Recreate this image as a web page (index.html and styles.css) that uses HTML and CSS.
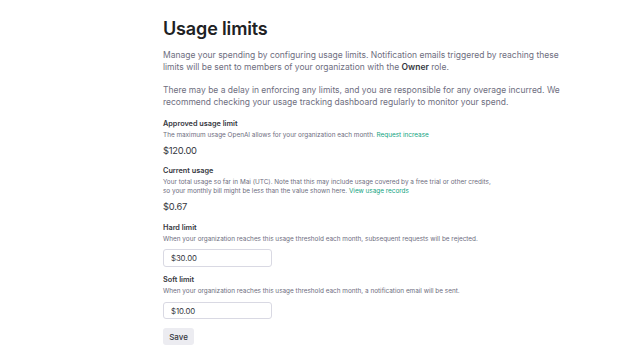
FILE: index.html
```html
<!DOCTYPE html>
<html lang="en">
<head>
<meta charset="utf-8">
<title>Usage limits</title>
<link rel="stylesheet" href="styles.css">
</head>
<body>
<main class="page">
  <h1 class="title">Usage limits</h1>
  <p class="intro">Manage your spending by configuring usage limits. Notification emails triggered by reaching these limits will be sent to members of your organization with the <strong>Owner</strong> role.</p>
  <p class="intro">There may be a delay in enforcing any limits, and you are responsible for any overage incurred. We recommend checking your usage tracking dashboard regularly to monitor your spend.</p>

  <section class="field">
    <h2 class="label">Approved usage limit</h2>
    <p class="desc">The maximum usage OpenAI allows for your organization each month. <a class="link" href="#">Request increase</a></p>
    <div class="value">$120.00</div>
  </section>

  <section class="field">
    <h2 class="label">Current usage</h2>
    <p class="desc">Your total usage so far in Mai (UTC). Note that this may include usage covered by a free trial or other credits,<br>so your monthly bill might be less than the value shown here. <a class="link" href="#">View usage records</a></p>
    <div class="value">$0.67</div>
  </section>

  <section class="field">
    <h2 class="label">Hard limit</h2>
    <p class="desc">When your organization reaches this usage threshold each month, subsequent requests will be rejected.</p>
    <input class="input" type="text" value="$30.00">
  </section>

  <section class="field">
    <h2 class="label">Soft limit</h2>
    <p class="desc">When your organization reaches this usage threshold each month, a notification email will be sent.</p>
    <input class="input" type="text" value="$10.00">
  </section>

  <button class="save" type="button">Save</button>
</main>
</body>
</html>
```

FILE: styles.css
```css
* { box-sizing: border-box; }

html, body {
  margin: 0;
  padding: 0;
  background: #ffffff;
}

body {
  font-family: "Inter", "Noto Sans", "Liberation Sans", sans-serif;
  color: #353740;
}

.page {
  width: 410px;
  margin-left: 163px;
  padding-top: 16.5px;
  display: flex;
  flex-direction: column;
  align-items: flex-start;
}

.title {
  margin: 0 0 8px;
  font-size: 18px;
  line-height: 24px;
  font-weight: 600;
  color: #202123;
  letter-spacing: -0.15px;
}

.intro {
  margin: 0 0 11px;
  font-size: 8.5px;
  line-height: 12px;
  color: #6e6e80;
}

.intro strong {
  font-weight: 600;
  color: #353740;
}

.field {
  display: flex;
  flex-direction: column;
  align-items: flex-start;
  margin-bottom: 8.5px;
}

.intro + .field { margin-top: 0.4px; }

.label {
  margin: 0 0 2px;
  font-size: 7.3px;
  line-height: 10px;
  font-weight: 600;
  color: #353740;
}

.desc {
  margin: 0 0 4px;
  font-size: 6.4px;
  line-height: 9px;
  color: #6e6e80;
  white-space: nowrap;
}

.link {
  color: #10a37f;
  text-decoration: none;
}

.value {
  font-size: 9.4px;
  line-height: 14px;
  letter-spacing: -0.25px;
  color: #353740;
}

.input {
  margin-top: 1.5px;
  width: 109px;
  height: 17.5px;
  padding: 0 7px;
  border: 1px solid #d9d9e3;
  border-radius: 3px;
  font-family: inherit;
  font-size: 7.8px;
  letter-spacing: -0.1px;
  color: #353740;
  background: #ffffff;
  outline: none;
}

.save {
  margin: 0;
  width: 31px;
  height: 17.5px;
  padding: 0;
  border: 0;
  border-radius: 3px;
  background: #ececf1;
  font-family: inherit;
  font-size: 8px;
  font-weight: 500;
  color: #353740;
}
```
